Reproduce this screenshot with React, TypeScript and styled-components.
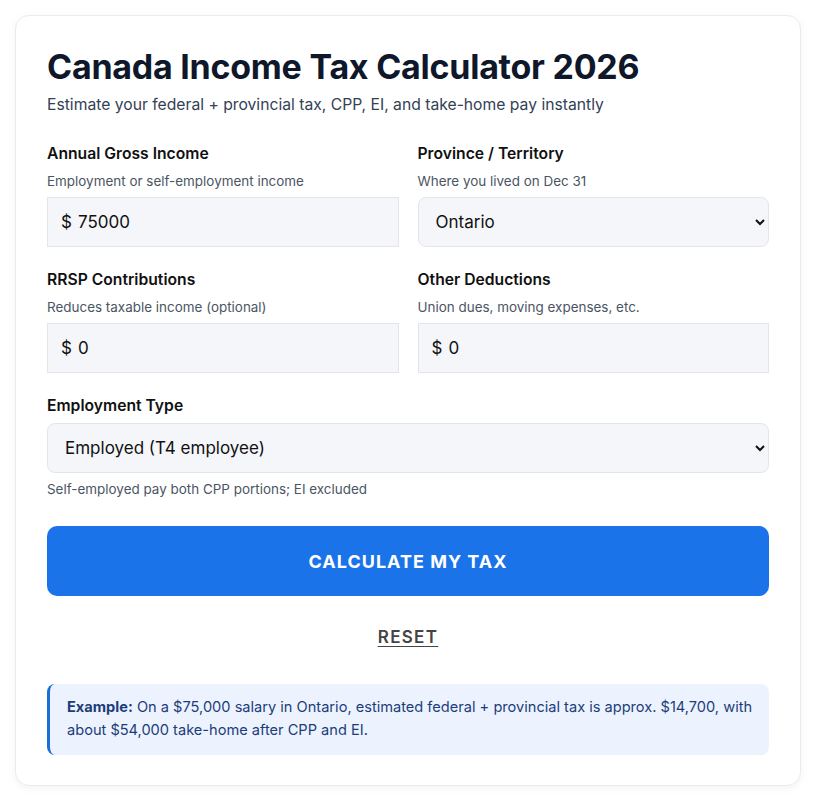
import { styled, createGlobalStyle } from 'styled-components';

const GlobalStyle = createGlobalStyle`
  * {
    box-sizing: border-box;
  }

  body {
    margin: 0;
    background: #ffffff;
    font-family: Inter, 'Noto Sans', Arial, sans-serif;
    color: #111827;
  }
`;

const PROVINCES = [
  'Alberta',
  'British Columbia',
  'Manitoba',
  'New Brunswick',
  'Newfoundland and Labrador',
  'Nova Scotia',
  'Ontario',
  'Prince Edward Island',
  'Quebec',
  'Saskatchewan',
  'Northwest Territories',
  'Nunavut',
  'Yukon',
];

const App = () => {
  return (
    <Page>
      <GlobalStyle />
      <Card>
        <Title>Canada Income Tax Calculator 2026</Title>
        <Subtitle>Estimate your federal + provincial tax, CPP, EI, and take-home pay instantly</Subtitle>

        <Grid>
          <Field>
            <Label htmlFor="income">Annual Gross Income</Label>
            <Hint>Employment or self-employment income</Hint>
            <MoneyInput>
              <Currency>$</Currency>
              <Input id="income" defaultValue="75000" inputMode="decimal" />
            </MoneyInput>
          </Field>

          <Field>
            <Label htmlFor="province">Province / Territory</Label>
            <Hint>Where you lived on Dec 31</Hint>
            <Select id="province" defaultValue="Ontario">
              {PROVINCES.map((p) => (
                <option key={p} value={p}>
                  {p}
                </option>
              ))}
            </Select>
          </Field>

          <Field>
            <Label htmlFor="rrsp">RRSP Contributions</Label>
            <Hint>Reduces taxable income (optional)</Hint>
            <MoneyInput>
              <Currency>$</Currency>
              <Input id="rrsp" defaultValue="0" inputMode="decimal" />
            </MoneyInput>
          </Field>

          <Field>
            <Label htmlFor="other">Other Deductions</Label>
            <Hint>Union dues, moving expenses, etc.</Hint>
            <MoneyInput>
              <Currency>$</Currency>
              <Input id="other" defaultValue="0" inputMode="decimal" />
            </MoneyInput>
          </Field>

          <WideField>
            <Label htmlFor="employment" $tight>
              Employment Type
            </Label>
            <Select id="employment" defaultValue="employed">
              <option value="employed">Employed (T4 employee)</option>
              <option value="self">Self-employed</option>
            </Select>
            <Hint $below>Self-employed pay both CPP portions; EI excluded</Hint>
          </WideField>
        </Grid>

        <CalculateButton type="button">Calculate My Tax</CalculateButton>
        <ResetButton type="button">Reset</ResetButton>

        <ExampleBox>
          <strong>Example:</strong> On a $75,000 salary in Ontario, estimated federal + provincial tax is approx.
          $14,700, with about $54,000 take-home after CPP and EI.
        </ExampleBox>
      </Card>
    </Page>
  );
};

export default App;

const Page = styled.div`
  padding: 15px 16px 20px 15px;
`;

const Card = styled.div`
  width: 786px;
  padding: 31px 31px 30px;
  background: #ffffff;
  border: 1px solid #ebebeb;
  border-radius: 14px;
  box-shadow: 0 2px 10px rgba(0, 0, 0, 0.05);
`;

const Title = styled.h1`
  margin: 0 0 6px;

  font-size: 34px;
  font-weight: 700;
  line-height: 1.2;
  color: #0f172a;
  letter-spacing: -0.25px;
`;

const Subtitle = styled.p`
  margin: 0 0 28px;

  font-size: 15.7px;
  line-height: 1.4;
  color: #334155;
`;

const Grid = styled.div`
  display: grid;
  grid-template-columns: 1fr 1fr;
  column-gap: 19px;
  row-gap: 23px;
`;

const Field = styled.div`
  display: flex;
  flex-direction: column;
`;

const WideField = styled(Field)`
  grid-column: 1 / -1;
`;

const Label = styled.label<{ $tight?: boolean }>`
  margin-bottom: ${({ $tight }) => ($tight ? '7px' : '9px')};

  font-size: 15.7px;
  font-weight: 600;
  line-height: 1.3;
  color: #111111;
`;

const Hint = styled.span<{ $below?: boolean }>`
  margin: ${({ $below }) => ($below ? '8px 0 0' : '0 0 6px')};

  font-size: 13.45px;
  line-height: 1.3;
  color: #4b5563;
`;

const MoneyInput = styled.div`
  display: flex;
  align-items: center;
  gap: 6px;
  height: 50px;
  padding: 0 13px;

  background: #f5f6fa;
  border: 1px solid #e3e5ea;
`;

const Currency = styled.span`
  font-size: 17px;
  color: #111111;
`;

const Input = styled.input`
  flex: 1;
  min-width: 0;
  padding: 0;

  font-family: inherit;
  font-size: 17px;
  color: #111111;
  background: transparent;
  border: none;
  outline: none;
`;

const Select = styled.select`
  width: 100%;
  height: 50px;
  padding: 0 12px 0 13px;

  font-family: inherit;
  font-size: 17px;
  color: #111111;
  background: #f5f6fa;
  border: 1px solid #e3e5ea;
  border-radius: 8px;
  outline: none;
`;

const CalculateButton = styled.button`
  display: block;
  width: 100%;
  height: 70px;
  margin-top: 28px;

  font-family: inherit;
  font-size: 18px;
  font-weight: 700;
  color: #ffffff;
  text-transform: uppercase;
  letter-spacing: 1px;
  background: #1a73e8;
  border: none;
  border-radius: 10px;
  cursor: pointer;
`;

const ResetButton = styled.button`
  display: block;
  margin: 31px auto 0;
  padding: 0;

  font-family: inherit;
  font-size: 17px;
  font-weight: 600;
  color: #444444;
  text-transform: uppercase;
  text-decoration: underline;
  text-underline-offset: 3px;
  letter-spacing: 1.3px;
  background: none;
  border: none;
  cursor: pointer;
`;

const ExampleBox = styled.p`
  margin: 37px 0 0;
  padding: 12px 14px 13px 17px;

  font-size: 14.6px;
  line-height: 23px;
  color: #1c3d7a;
  background: #ecf3fe;
  border-left: 3px solid #1a6fd6;
  border-radius: 8px;

  strong {
    font-weight: 700;
  }
`;
